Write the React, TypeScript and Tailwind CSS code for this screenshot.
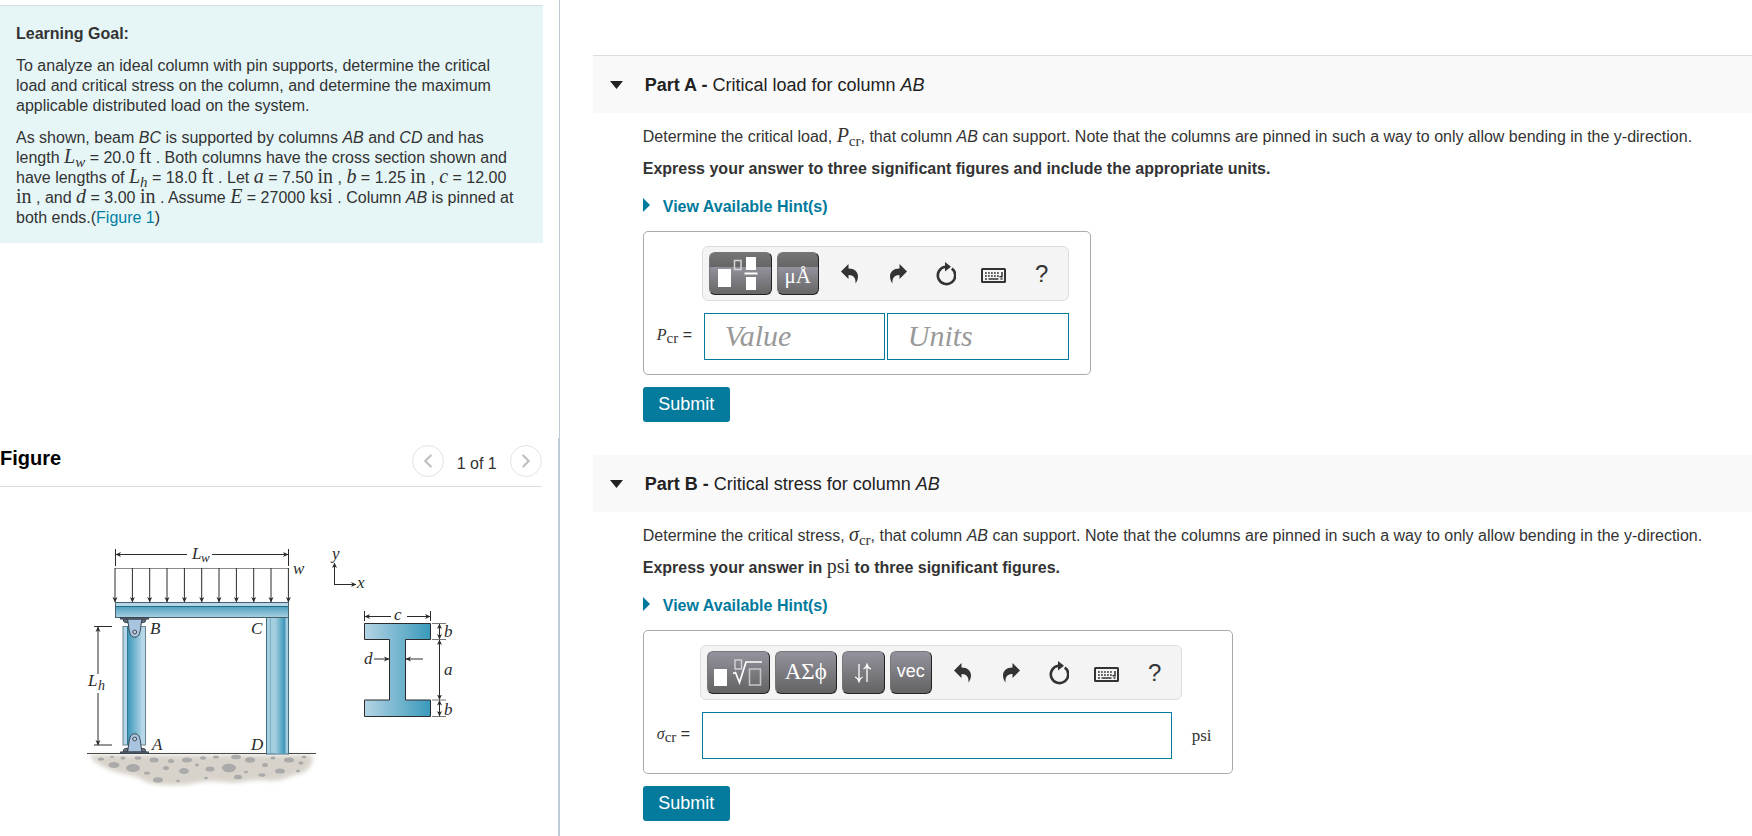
import type { ReactNode } from "react";
import { ChevronLeft, ChevronRight } from "lucide-react";

const SERIF = "font-['Liberation_Serif',serif]";

function Sym({ children, sub, subUpright }: { children: ReactNode; sub?: string; subUpright?: boolean }) {
  return (
    <span className={`${SERIF} text-[20px] leading-[0px] italic`}>
      {children}
      {sub && <sub className={subUpright ? "not-italic" : ""}>{sub}</sub>}
    </span>
  );
}

function Unit({ children }: { children: ReactNode }) {
  return <span className={`${SERIF} text-[20px] leading-[0px] font-normal`}>{children}</span>;
}

function LearningGoal() {
  return (
    <section className="flex flex-col gap-3 border-t border-[#d9dee0] bg-[#e6f6f7] pt-[18px] pr-6 pb-[15px] pl-4 leading-5">
      <h2 className="font-bold">Learning Goal:</h2>
      <p>
        To analyze an ideal column with pin supports, determine the critical load and critical stress on the column,
        and determine the maximum applicable distributed load on the system.
      </p>
      <p>
        As shown, beam <i>BC</i> is supported by columns <i>AB</i> and <i>CD</i> and has length{" "}
        <Sym sub="w">L</Sym> = 20.0 <Unit>ft</Unit> . Both columns have the cross section shown and have lengths of{" "}
        <Sym sub="h">L</Sym> = 18.0 <Unit>ft</Unit> . Let <Sym>a</Sym> = 7.50 <Unit>in</Unit> , <Sym>b</Sym> = 1.25{" "}
        <Unit>in</Unit> , <Sym>c</Sym> = 12.00 <Unit>in</Unit> , and <Sym>d</Sym> = 3.00 <Unit>in</Unit> . Assume{" "}
        <Sym>E</Sym> = 27000 <Unit>ksi</Unit> . Column <i>AB</i> is pinned at both ends.(
        <a href="#figure-1" className="text-[#007fa3]">
          Figure 1
        </a>
        )
      </p>
    </section>
  );
}

const LOAD_X = [115, 132.4, 149.7, 167, 184.4, 201.7, 219, 236.4, 253.7, 271, 288.4];

const STONES: [number, number, number, number][] = [
  [101, 759, 3, 1.5], [114, 765, 5.5, 3], [133, 768, 7, 4], [123, 758, 2.5, 1.5], [138, 758, 3.5, 1.8],
  [154, 760, 4.5, 2.5], [147, 773, 3, 1.6], [158, 780, 5, 2.8], [166, 768, 3, 2], [171, 761, 3, 2],
  [184, 771, 5, 3], [187, 760, 5, 2.5], [197, 765, 2, 1.4], [210, 769, 4.5, 2.6], [203, 758, 3, 1.7],
  [216, 757, 3, 1.6], [229, 768, 7, 4.2], [236, 757, 5, 2.2], [238, 777, 4, 2.2], [250, 760, 5, 2.8],
  [246, 772, 2, 1.3], [265, 765, 3, 2], [262, 775, 3.5, 1.8], [273, 758, 2.5, 1.5], [280, 771, 5, 2.6],
  [289, 760, 5, 2.6], [301, 763, 2.5, 1.8], [206, 778, 2, 1.2], [178, 781, 2, 1.3], [298, 771, 2, 1.3],
  [304, 757, 2.5, 1.3], [112, 757, 2, 1.1],
];

function Bracket() {
  return (
    <g stroke="#3c4650" strokeWidth="1">
      <path d="M123 619 L127 619 L128 623 L124 622Z M146 619 L142 619 L141 623 L145 622Z" fill="#667380" />
      <path
        d="M127.5 619 C129 625 128.5 630 130 633.5 C131.5 638.5 138 638.5 139.500 633.5 C141 630 140.500 625 142 619Z"
        fill="#a9c4de"
      />
      <rect x="120.500" y="617.500" width="28" height="1.500" fill="#56697d" />
      <circle cx="134.700" cy="632" r="1.900" fill="#c6d3df" />
    </g>
  );
}

function ColumnFigure() {
  const ink = "#2b2b2b";
  return (
    <svg
      id="figure-1"
      role="img"
      aria-label="Beam BC on columns AB and CD, with the column cross section"
      viewBox="85 540 375 255"
      className="mt-[53px] ml-[85px] h-[255px] w-[375px]"
      fontFamily="Liberation Serif, serif"
      fontStyle="italic"
      fontSize="17"
      fill={ink}
    >
      <defs>
        <linearGradient id="web-h" x1="0" x2="0" y1="0" y2="1">
          <stop offset="0" stopColor="#2f8db0" />
          <stop offset="1" stopColor="#a9d1e2" />
        </linearGradient>
        <linearGradient id="web-ab" x1="0" x2="1">
          <stop offset="0" stopColor="#3a97b9" />
          <stop offset="1" stopColor="#a5cfe1" />
        </linearGradient>
        <linearGradient id="web-cd" x1="0" x2="1">
          <stop offset="0" stopColor="#a5cfe1" />
          <stop offset="1" stopColor="#3a97b9" />
        </linearGradient>
        <linearGradient id="section" x1="0" x2="1">
          <stop offset="0" stopColor="#b4d4e4" />
          <stop offset="1" stopColor="#3999bb" />
        </linearGradient>
        <filter id="soft" x="-10%" y="-20%" width="120%" height="140%">
          <feGaussianBlur stdDeviation="2" />
        </filter>
        <marker id="tip" orient="auto-start-reverse" markerUnits="userSpaceOnUse" markerWidth="6" markerHeight="6" refX="5" refY="3">
          <path d="M0 0.500 L5.500 3 L0 5.500 L1.500 3Z" fill={ink} />
        </marker>
      </defs>

      <path
        d="M90 755 H312 C314 763 309 772 298 774 C286 777 282 783 262 780 C246 779 238 785 224 782 C208 780 200 782 190 784 C174 786 150 786 141 779 C130 774 120 774 110 770 C102 766 92 762 90 755Z"
        fill="#d8d3ca"
        filter="url(#soft)"
      />
      <g fill="#aaaaab">
        {STONES.map(([x, y, rx, ry]) => (
          <ellipse key={`${x}-${y}`} cx={x} cy={y} rx={rx} ry={ry} />
        ))}
      </g>
      <path d="M87 753.500 H316" stroke="#4a4a4a" />

      <g stroke={ink} fill="none">
        <path d="M115.500 549 V566 M288.500 549 V566" />
        <path d="M187 554.500 H116" markerEnd="url(#tip)" />
        <path d="M212 554.500 H288" markerEnd="url(#tip)" />
        <path d="M115 568.500 H289" stroke="#8b8b8b" />
        {LOAD_X.map((x) => (
          <path key={x} d={`M${x} 568 V602`} markerEnd="url(#tip)" />
        ))}
        <path d="M94 626.500 H112 M94 745 H112" />
        <path d="M98 674 V627" markerEnd="url(#tip)" />
        <path d="M98 693 V745" markerEnd="url(#tip)" />
        <path d="M334.500 585 V563" markerEnd="url(#tip)" />
        <path d="M334 584.500 H356" markerEnd="url(#tip)" />
      </g>

      <rect x="123" y="626.500" width="22.500" height="118.500" fill="#b5d7e7" stroke="#6d8490" />
      <rect x="127.500" y="626.500" width="13.500" height="118.500" fill="url(#web-ab)" />
      <path d="M127.500 626 V745" stroke="#2f7894" />
      <rect x="266.500" y="617" width="22" height="137" fill="#a5cfe1" stroke="#416d80" />
      <rect x="275" y="617.500" width="10" height="136" fill="url(#web-cd)" />
      <path d="M270.500 617 V753 M285.500 617 V753" stroke="#6aa4bb" strokeWidth="0.700" />
      <rect x="115.500" y="602.500" width="173" height="15" fill="url(#web-h)" stroke="#46606c" />
      <rect x="116" y="603" width="172" height="3" fill="#b5d7e7" />
      <path d="M116 606.500 H288" stroke="#246d89" />
      <Bracket />
      <g transform="translate(0 1371) scale(1 -1)">
        <Bracket />
      </g>

      <text x="192" y="559">L</text>
      <text x="201" y="562" fontSize="13">w</text>
      <text x="293" y="574">w</text>
      <text x="332" y="559">y</text>
      <text x="357" y="588">x</text>
      <text x="150" y="634">B</text>
      <text x="251" y="634">C</text>
      <text x="152" y="750">A</text>
      <text x="251" y="750">D</text>
      <text x="88" y="686">L</text>
      <text x="98" y="690" fontSize="14">h</text>

      <path
        d="M364.500 623.500 H430.500 V639.500 H405.500 V700 H430.500 V716.500 H364.500 V700 H389.500 V639.500 H364.500Z"
        fill="url(#section)"
        stroke={ink}
      />
      <g stroke={ink} fill="none">
        <path d="M364.500 611 V621 M430.500 611 V621" />
        <path d="M391 616.500 H365" markerEnd="url(#tip)" />
        <path d="M407 616.500 H430" markerEnd="url(#tip)" />
        <path d="M432 623.500 H446 M432 639.500 H446 M432 700 H446 M432 716.500 H446" stroke="#777" />
        <path d="M439.500 624 V639" markerStart="url(#tip)" markerEnd="url(#tip)" />
        <path d="M439.500 640 V699.500" markerStart="url(#tip)" markerEnd="url(#tip)" />
        <path d="M439.500 700.500 V716" markerStart="url(#tip)" markerEnd="url(#tip)" />
        <path d="M374 659 H389" markerEnd="url(#tip)" />
        <path d="M423 659 H406" markerEnd="url(#tip)" />
      </g>
      <text x="394" y="620">c</text>
      <text x="364" y="664">d</text>
      <text x="444" y="637">b</text>
      <text x="444" y="675">a</text>
      <text x="444" y="715">b</text>
    </svg>
  );
}

function FigurePanel() {
  const pager = "flex size-8 items-center justify-center rounded-full border border-[#e4e4e4] text-[#c0c0c0]";
  return (
    <section>
      <header className="flex items-start justify-between border-b border-[#dcdcdc] pt-[5px] pb-[9px]">
        <h2 className="pt-px text-xl leading-7 font-bold text-black">Figure</h2>
        <nav className="flex items-center gap-[13px] pt-0.5">
          <button type="button" aria-label="Previous figure" className={pager}>
            <ChevronLeft size={22} strokeWidth={2.5} />
          </button>
          <span className="pt-1.5">1 of 1</span>
          <button type="button" aria-label="Next figure" className={pager}>
            <ChevronRight size={22} strokeWidth={2.5} />
          </button>
        </nav>
      </header>
      <ColumnFigure />
    </section>
  );
}

function UndoIcon({ flip }: { flip?: boolean }) {
  return (
    <svg width="18" height="20" viewBox="0 0 18 20" fill="#333" className={flip ? "-scale-x-100" : ""}>
      <path d="M0 7.500 L7.500 0 V4.500 C13.500 4.500 17 8 17 12.500 C17 15 16 17.500 14.500 19.500 C15 14 12.500 11 7.500 11 V15Z" />
    </svg>
  );
}

function ResetIcon() {
  return (
    <svg width="20" height="24" viewBox="0 0 20 24">
      <path d="M15.800 6.500 A8.700 8.700 0 1 1 9.500 4.800" fill="none" stroke="#333" strokeWidth="2.600" />
      <path d="M9 0 L15 4.800 L9 9.500Z" fill="#333" />
    </svg>
  );
}

function KeyboardIcon() {
  return (
    <svg width="25" height="15" viewBox="0 0 25 15">
      <rect x="1" y="1" width="23" height="13" rx="0.500" fill="none" stroke="#333" strokeWidth="2" />
      <path d="M4 5 H19 M4 8 H18" stroke="#333" strokeWidth="1.600" strokeDasharray="1.800 1.200" />
      <path d="M21 4 V8.800 H18.500" fill="none" stroke="#333" strokeWidth="1.500" />
      <path d="M4 11 H6 M7.500 11 H17.500 M19.500 11 H21.500" stroke="#333" strokeWidth="1.600" />
    </svg>
  );
}

function EditActions() {
  const action = "flex h-[43px] w-8 items-center justify-center";
  return (
    <div className="flex items-center gap-4">
      <button type="button" aria-label="Undo" className={action}>
        <UndoIcon />
      </button>
      <button type="button" aria-label="Redo" className={action}>
        <UndoIcon flip />
      </button>
      <button type="button" aria-label="Reset" className={action}>
        <ResetIcon />
      </button>
      <button type="button" aria-label="Keyboard shortcuts" className={`${action} pt-1`}>
        <KeyboardIcon />
      </button>
      <button type="button" aria-label="Help" className={`${action} text-2xl text-[#333]`}>
        ?
      </button>
    </div>
  );
}

function ToolButton({ label, className, children }: { label: string; className: string; children: ReactNode }) {
  return (
    <button
      type="button"
      aria-label={label}
      className={`flex h-[43px] items-center justify-center rounded-md border border-t-[#777] border-r-[#222] border-b-[#222] border-l-[#777] text-white ${className}`}
    >
      {children}
    </button>
  );
}

const SPLIT = "bg-[linear-gradient(#757575,#656565_34%,#93919c_35%,#666)]";
const SMOOTH = "bg-[linear-gradient(#94929d,#636363)]";

function TemplateIcon() {
  return (
    <svg width="40" height="34" viewBox="0 0 40 34" fill="#fff">
      <rect x="0" y="12" width="13" height="18" />
      <rect x="16.500" y="3.500" width="6.500" height="9" fill="none" stroke="#d5d5d5" strokeWidth="1.500" />
      <path d="M28 0 H38 V13 H28Z M28 20 H38 V33 H28Z M26.500 15.500 H39.500 V17.500 H26.500Z" />
    </svg>
  );
}

function RootIcon() {
  return (
    <svg width="48" height="28" viewBox="0 0 48 28" fill="none">
      <rect x="0" y="10" width="13" height="17" fill="#fff" />
      <rect x="21" y="1" width="6.500" height="9" stroke="#d5d5d5" strokeWidth="1.400" />
      <path d="M19 14.500 L21.500 13.500 L25.500 23.500 L32 3 H48" stroke="#fff" strokeWidth="1.700" />
      <rect x="35.500" y="10" width="11" height="16" stroke="#c4c4c4" strokeWidth="1.600" />
    </svg>
  );
}

function Part({
  name,
  title,
  first,
  children,
}: {
  name: string;
  title: string;
  first?: boolean;
  children: ReactNode;
}) {
  return (
    <section>
      <h2
        className={`flex h-[57px] items-center gap-[22px] bg-[#f9f9f9] pl-[17px] text-lg text-[#222] ${first ? "box-content border-t border-[#dcdfdf]" : ""}`}
      >
        <svg width="13" height="8" viewBox="0 0 13 8" fill="#222" aria-hidden="true">
          <path d="M0 0 H13 L6.500 8Z" />
        </svg>
        <span>
          <b>{name} - </b>
          {title} <i>AB</i>
        </span>
      </h2>
      <div className="pt-3.5 pl-[50px]">{children}</div>
    </section>
  );
}

function Hints() {
  return (
    <button type="button" className="mt-4 flex items-center gap-[13px] leading-6 font-bold text-[#007a9c]">
      <svg width="7" height="14" viewBox="0 0 7 14" fill="currentColor" aria-hidden="true" className="mb-1">
        <path d="M0 0 L7 7 L0 14Z" />
      </svg>
      View Available Hint(s)
    </button>
  );
}

function Submit() {
  return (
    <button type="submit" className="mt-3 block h-[35px] w-[87px] rounded-[3px] bg-[#047a9c] pb-0.5 text-lg leading-none text-white">
      Submit
    </button>
  );
}

const FIELD = "h-[47px] border border-[#047a9c] bg-white px-5 pb-0.5 text-[30px] font-['Liberation_Serif',serif] italic placeholder:text-[#999] outline-none";
const CARD = "mt-3 w-fit rounded-[5px] border border-[#aaa]";
const TOOLBAR = "flex w-fit gap-[5px] rounded-md border border-[#ddd] bg-[#f4f4f4] py-[5px] pr-2.5 pl-1.5";

export default function App() {
  return (
    <main className="flex min-h-screen overflow-x-hidden bg-white font-['Liberation_Sans',Arial,sans-serif] text-base text-[#333]">
      <aside className="flex w-[31.95%] shrink-0 flex-col">
        <div className="h-[438px] border-r border-[#c0c8d2] pt-[5px] pr-4">
          <LearningGoal />
        </div>
        <div className="flex-1 border-r-2 border-[#bccada] pr-4">
          <FigurePanel />
        </div>
      </aside>

      <div className="min-w-0 flex-1 pt-[55px] pl-[33px]">
        <Part name="Part A" title="Critical load for column" first>
          <p className="leading-5">
            Determine the critical load,{" "}
            <Sym sub="cr" subUpright>
              P
            </Sym>
            , that column <i>AB</i> can support. Note that the columns are pinned in such a way to only allow bending in
            the y-direction.
          </p>
          <p className="mt-3 leading-5 font-bold">
            Express your answer to three significant figures and include the appropriate units.
          </p>
          <Hints />
          <form onSubmit={(e) => e.preventDefault()}>
            <div className={`${CARD} px-[13px] pt-3.5 pr-[21px] pb-3.5`}>
              <div className={`${TOOLBAR} ml-[45px]`}>
                <ToolButton label="Templates" className={`w-[63px] pr-1 ${SPLIT}`}>
                  <TemplateIcon />
                </ToolButton>
                <ToolButton label="Units" className={`mr-2.5 w-[42px] text-[21px] ${SPLIT}`}>
                  <span className={`${SERIF} pt-1.5`}>μÅ</span>
                </ToolButton>
                <EditActions />
              </div>
              <div className="mt-3 flex items-center">
                <label htmlFor="pcr-value" className="w-[47px] pb-1">
                  <span className={`${SERIF} italic`}>P</span>
                  <sub className={`${SERIF} text-[15px]`}>cr</sub> =
                </label>
                <input id="pcr-value" placeholder="Value" className={`w-[181px] ${FIELD}`} />
                <input aria-label="Units" placeholder="Units" className={`ml-0.5 w-[182px] ${FIELD}`} />
              </div>
            </div>
            <Submit />
          </form>
        </Part>

        <div className="pt-[33px]">
          <Part name="Part B" title="Critical stress for column">
            <p className="leading-5">
              Determine the critical stress,{" "}
              <Sym sub="cr" subUpright>
                σ
              </Sym>
              , that column <i>AB</i> can support. Note that the columns are pinned in such a way to only allow bending
              in the y-direction.
            </p>
            <p className="mt-3 leading-5 font-bold">
              Express your answer in <Unit>psi</Unit> to three significant figures.
            </p>
            <Hints />
            <form onSubmit={(e) => e.preventDefault()}>
              <div className={`${CARD} px-[13px] pt-3.5 pr-5 pb-3.5`}>
                <div className={`${TOOLBAR} ml-[43px]`}>
                  <ToolButton label="Templates" className={`w-[63px] ${SMOOTH}`}>
                    <RootIcon />
                  </ToolButton>
                  <ToolButton label="Greek symbols" className={`w-[62px] text-[23px] ${SMOOTH}`}>
                    <span className={SERIF}>ΑΣϕ</span>
                  </ToolButton>
                  <ToolButton label="Arrows" className={`w-[43px] ${SMOOTH}`}>
                    <svg width="18" height="20" viewBox="0 0 18 20" fill="none" stroke="#fff" strokeWidth="1.300">
                      <path d="M5 1 V18 M1 14 Q4 15 5 18.500 Q6 15 8.500 14 M13 19 V2 M9.500 6 Q12 5 13 1.500 Q14 5 17 6" />
                    </svg>
                  </ToolButton>
                  <ToolButton label="Vector" className={`mr-2.5 w-[42px] pb-1 text-lg ${SMOOTH}`}>
                    vec
                  </ToolButton>
                  <EditActions />
                </div>
                <div className="mt-3 flex items-center">
                  <label htmlFor="scr-value" className="w-[45px] pb-1">
                    <span className={`${SERIF} italic`}>σ</span>
                    <sub className={`${SERIF} text-[15px]`}>cr</sub> =
                  </label>
                  <input id="scr-value" className={`w-[470px] ${FIELD}`} />
                  <span className={`${SERIF} ml-5 text-[17px]`}>psi</span>
                </div>
              </div>
              <Submit />
            </form>
          </Part>
        </div>
      </div>
    </main>
  );
}
